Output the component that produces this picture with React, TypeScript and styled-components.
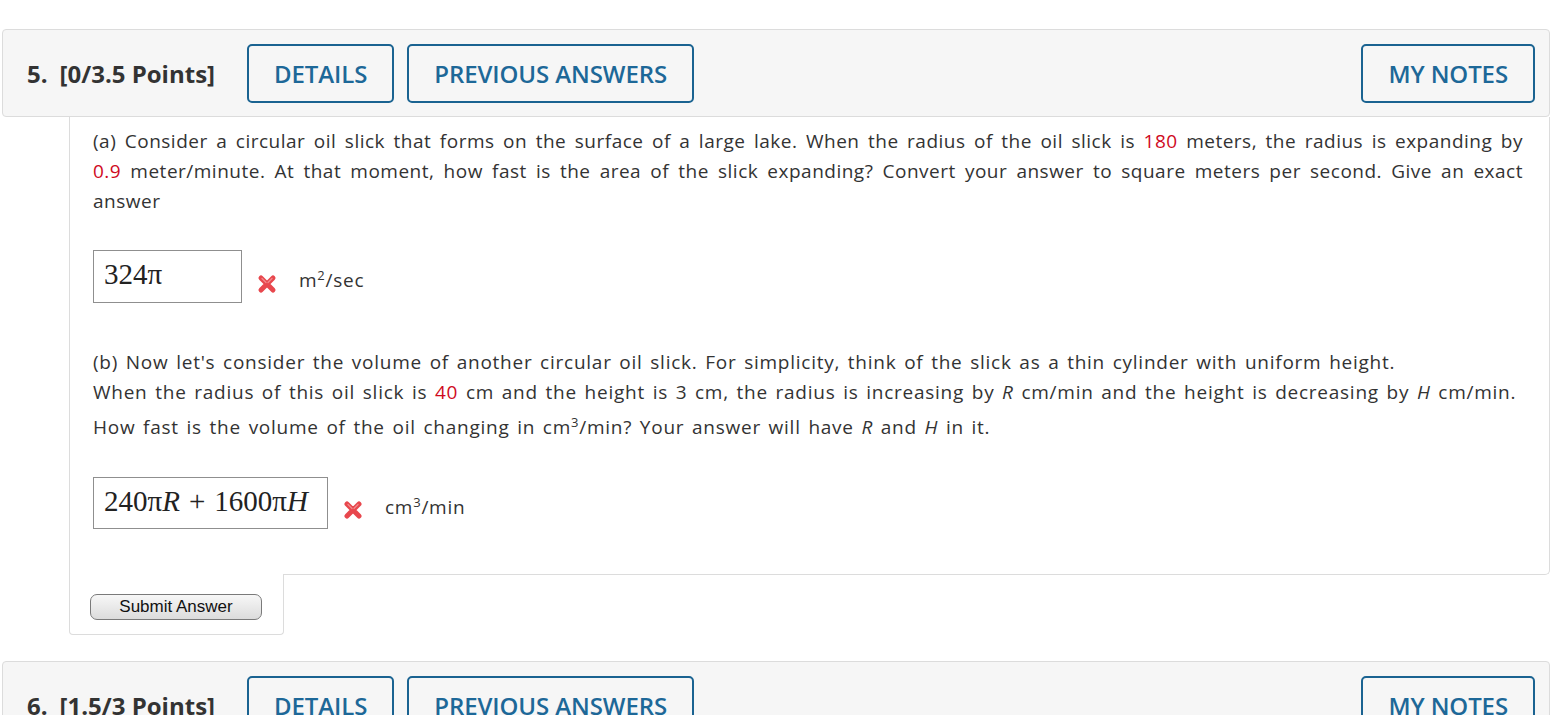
import styled, { createGlobalStyle } from "styled-components";

const GlobalStyle = createGlobalStyle`
  * { box-sizing: border-box; }
  body {
    margin: 0;
    background: #ffffff;
    font-family: "Open Sans", "DejaVu Sans", Verdana, sans-serif;
    color: #333333;
  }
`;

const questions = [
  { num: "5.", points: "[0/3.5 Points]" },
  { num: "6.", points: "[1.5/3 Points]" },
];

function WrongMark() {
  return (
    <Mark viewBox="0 0 20 20" aria-hidden="true">
      <path d="M4 4 L16 16 M16 4 L4 16" stroke="#e8474d" strokeWidth="5" strokeLinecap="round" />
      <path d="M5 4.5 L9 8.5 M15 4.5 L11 8.5" stroke="#f59a9c" strokeWidth="1.3" strokeLinecap="round" opacity="0.8" />
    </Mark>
  );
}

function QuestionHeader({ num, points }: { num: string; points: string }) {
  return (
    <Header>
      <Label>
        <span>{num}</span>
        <Points>{points}</Points>
      </Label>
      <HeaderButton $first>DETAILS</HeaderButton>
      <HeaderButton>PREVIOUS ANSWERS</HeaderButton>
      <HeaderButton $right>MY NOTES</HeaderButton>
    </Header>
  );
}

export default function App() {
  return (
    <>
      <GlobalStyle />
      <Page>
        <Question>
          <QuestionHeader num={questions[0].num} points={questions[0].points} />
          <Panel>
            <PartText $tight>
              (a) Consider a circular oil slick that forms on the surface of a large lake. When the
              radius of the oil slick is <Red>180</Red> meters, the radius is expanding by{" "}
              <Red>0.9</Red> meter/minute. At that moment, how fast is the area of the slick
              expanding? Convert your answer to square meters per second. Give an exact answer
            </PartText>
            <AnswerRow $top={34}>
              <AnswerBox $width={149} $height={53}>
                <span>324π</span>
              </AnswerBox>
              <WrongMark />
              <Unit>
                m<sup>2</sup>/sec
              </Unit>
            </AnswerRow>

            <PartText $top={44}>
              (b) Now let's consider the volume of another circular oil slick. For simplicity, think
              of the slick as a thin cylinder with uniform height.
              <br />
              When the radius of this oil slick is <Red>40</Red> cm and the height is 3 cm, the
              radius is increasing by <i>R</i> cm/min and the height is decreasing by <i>H</i> cm/min.
              <br />
              How fast is the volume of the oil changing in cm<sup>3</sup>/min? Your answer will have{" "}
              <i>R</i> and <i>H</i> in it.
            </PartText>
            <AnswerRow $top={35}>
              <AnswerBox $width={235} $height={52}>
                <span>
                  240π<i>R</i>
                </span>
                <Op>+</Op>
                <span>
                  1600π<i>H</i>
                </span>
              </AnswerBox>
              <WrongMark />
              <Unit>
                cm<sup>3</sup>/min
              </Unit>
            </AnswerRow>
          </Panel>
          <SubmitTab>
            <SubmitButton type="button">Submit Answer</SubmitButton>
          </SubmitTab>
        </Question>

        <Question>
          <QuestionHeader num={questions[1].num} points={questions[1].points} />
        </Question>
      </Page>
    </>
  );
}

/* ========= styled-components ========== */

const Page = styled.div`
  padding: 29px 4px 0 2px;
`;

const Question = styled.section`
  margin-bottom: 26px;
`;

const Header = styled.div`
  height: 88px;
  display: flex;
  align-items: center;
  padding: 0 14px 0 24px;
  background: #f6f6f6;
  border: 1px solid #dcdcdc;
  border-radius: 4px;
`;

const Label = styled.div`
  font-family: "Open Sans", sans-serif;
  font-weight: 700;
  font-size: 24px;
  color: #333333;
  letter-spacing: 0;
`;

const Points = styled.span`
  margin-left: 12px;
`;

const HeaderButton = styled.button<{ $first?: boolean; $right?: boolean }>`
  height: 59px;
  padding: 0 25px;
  margin-left: ${(p) => (p.$first ? "32px" : p.$right ? "auto" : "13px")};
  background: transparent;
  border: 2px solid #1a6391;
  border-radius: 5px;
  font-family: "Open Sans", sans-serif;
  font-weight: 600;
  font-size: 24px;
  color: #1d6898;
  letter-spacing: -0.1px;
  cursor: pointer;
`;

const Panel = styled.div`
  margin-left: 67px;
  padding: 9px 26px 45px 23px;
  border: 1px solid #dcdcdc;
  border-top: none;
  border-bottom-right-radius: 5px;
  font-family: "Open Sans", sans-serif;
  font-size: 19px;
  letter-spacing: 0.75px;
  word-spacing: 2px;
`;

const PartText = styled.p<{ $top?: number; $tight?: boolean }>`
  margin: ${(p) => p.$top ?? 0}px 0 0;
  line-height: 30px;
  text-align: justify;
  letter-spacing: ${(p) => (p.$tight ? "0.5px" : "0.75px")};

  sup {
    font-size: 13px;
  }
  i {
    font-style: italic;
  }
`;

const Red = styled.span`
  color: #cf0a1e;
`;

const AnswerRow = styled.div<{ $top: number }>`
  margin-top: ${(p) => p.$top}px;
  display: flex;
  align-items: center;
`;

const AnswerBox = styled.div<{ $width: number; $height: number }>`
  width: ${(p) => p.$width}px;
  height: ${(p) => p.$height}px;
  padding: 0 0 4px 10px;
  display: flex;
  align-items: center;
  border: 1px solid #8f8f8f;
  background: #ffffff;
  font-family: "Liberation Serif", "DejaVu Serif", serif;
  font-size: 29px;
  letter-spacing: 0;
  word-spacing: 0;
  color: #222222;
  white-space: nowrap;
`;

const Op = styled.span`
  margin: 0 9px;
`;

const Mark = styled.svg`
  width: 20px;
  height: 20px;
  margin: 14px 0 0 15px;
  flex-shrink: 0;
`;

const Unit = styled.span`
  margin: 7px 0 0 22px;
  font-size: 19px;
  color: #333333;

  sup {
    font-size: 13px;
    line-height: 0;
  }
`;

const SubmitTab = styled.div`
  position: relative;
  margin: -1px 0 0 67px;
  width: 215px;
  height: 61px;
  padding: 20px 0 0 20px;
  background: #ffffff;
  border: 1px solid #dcdcdc;
  border-top: none;
  border-radius: 0 0 4px 4px;
`;

const SubmitButton = styled.button`
  width: 172px;
  height: 26px;
  padding: 0;
  border: 1px solid #7a7a7a;
  border-radius: 7px;
  background: linear-gradient(#f7f7f7, #dcdcdc);
  font-family: "Liberation Sans", Arial, sans-serif;
  font-size: 17px;
  letter-spacing: 0;
  word-spacing: 0;
  color: #111111;
`;
